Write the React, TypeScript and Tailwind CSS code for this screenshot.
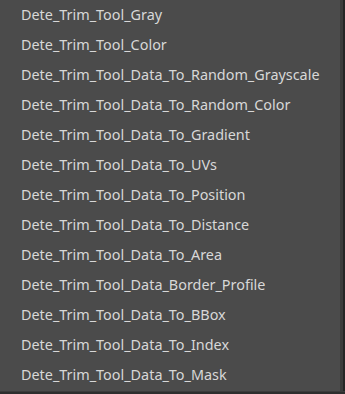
import React from "react";

const items = [
  "Dete_Trim_Tool_Gray",
  "Dete_Trim_Tool_Color",
  "Dete_Trim_Tool_Data_To_Random_Grayscale",
  "Dete_Trim_Tool_Data_To_Random_Color",
  "Dete_Trim_Tool_Data_To_Gradient",
  "Dete_Trim_Tool_Data_To_UVs",
  "Dete_Trim_Tool_Data_To_Position",
  "Dete_Trim_Tool_Data_To_Distance",
  "Dete_Trim_Tool_Data_To_Area",
  "Dete_Trim_Tool_Data_Border_Profile",
  "Dete_Trim_Tool_Data_To_BBox",
  "Dete_Trim_Tool_Data_To_Index",
  "Dete_Trim_Tool_Data_To_Mask",
];

export default function App() {
  return (
    <div className="w-[345px] h-[394px] bg-[#2e2e2e] flex flex-col">
      <div className="flex h-[391px]">
        <div className="w-[340px] bg-[#4b4b4b] flex flex-col" style={{ fontFamily: '"Noto Sans", "Open Sans", sans-serif' }}>
          {items.map((t) => (
            <div key={t} className="h-[30px] flex items-center pl-[21px] text-[14.4px] text-[#d8d8d8] whitespace-nowrap">
              {t}
            </div>
          ))}
        </div>
        <div className="w-[3px] bg-[#3c3c3c]" />
        <div className="w-[2px] bg-[#262626]" />
      </div>
      <div className="h-[1px] bg-[#3c3c3c]" />
    </div>
  );
}
